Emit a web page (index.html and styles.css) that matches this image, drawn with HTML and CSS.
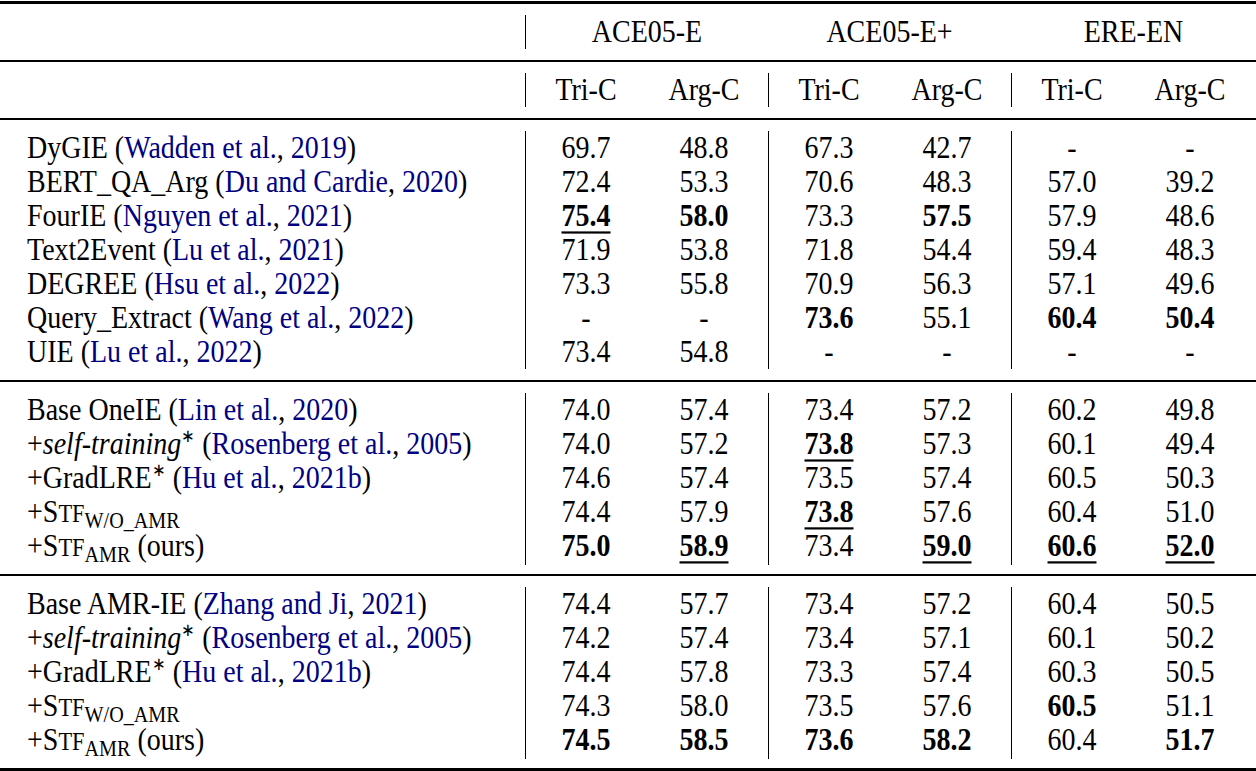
FILE: index.html
```html
<!DOCTYPE html>
<html>
<head>
<meta charset="utf-8">
<link rel="stylesheet" href="styles.css">
</head>
<body>
<div class="table">
  <div class="rule heavy"></div>
  <div class="block">
    <div class="row">
      <div class="name"></div>
      <div class="group head bar"><span class="t">ACE05-E</span></div>
      <div class="group head"><span class="t">ACE05-E+</span></div>
      <div class="group head"><span class="t">ERE-EN</span></div>
    </div>
  </div>
  <div class="rule"></div>
  <div class="block">
    <div class="row">
      <div class="name"></div>
      <div class="group bar"><span class="c">Tri-C</span><span class="c">Arg-C</span></div>
      <div class="group bar"><span class="c">Tri-C</span><span class="c">Arg-C</span></div>
      <div class="group bar"><span class="c">Tri-C</span><span class="c">Arg-C</span></div>
    </div>
  </div>
  <div class="rule"></div>
  <div class="block">
    <div class="row">
      <div class="name">DyGIE (<span class="cite">Wadden et al.</span>, <span class="cite">2019</span>)</div>
      <div class="group bar"><span class="c">69.7</span><span class="c">48.8</span></div>
      <div class="group bar"><span class="c">67.3</span><span class="c">42.7</span></div>
      <div class="group bar"><span class="c">-</span><span class="c">-</span></div>
    </div>
    <div class="row">
      <div class="name">BERT_QA_Arg (<span class="cite">Du and Cardie</span>, <span class="cite">2020</span>)</div>
      <div class="group bar"><span class="c">72.4</span><span class="c">53.3</span></div>
      <div class="group bar"><span class="c">70.6</span><span class="c">48.3</span></div>
      <div class="group bar"><span class="c">57.0</span><span class="c">39.2</span></div>
    </div>
    <div class="row">
      <div class="name">FourIE (<span class="cite">Nguyen et al.</span>, <span class="cite">2021</span>)</div>
      <div class="group bar"><span class="c"><b class="u">75.4</b></span><span class="c"><b>58.0</b></span></div>
      <div class="group bar"><span class="c">73.3</span><span class="c"><b>57.5</b></span></div>
      <div class="group bar"><span class="c">57.9</span><span class="c">48.6</span></div>
    </div>
    <div class="row">
      <div class="name">Text2Event (<span class="cite">Lu et al.</span>, <span class="cite">2021</span>)</div>
      <div class="group bar"><span class="c">71.9</span><span class="c">53.8</span></div>
      <div class="group bar"><span class="c">71.8</span><span class="c">54.4</span></div>
      <div class="group bar"><span class="c">59.4</span><span class="c">48.3</span></div>
    </div>
    <div class="row">
      <div class="name">DEGREE (<span class="cite">Hsu et al.</span>, <span class="cite">2022</span>)</div>
      <div class="group bar"><span class="c">73.3</span><span class="c">55.8</span></div>
      <div class="group bar"><span class="c">70.9</span><span class="c">56.3</span></div>
      <div class="group bar"><span class="c">57.1</span><span class="c">49.6</span></div>
    </div>
    <div class="row">
      <div class="name">Query_Extract (<span class="cite">Wang et al.</span>, <span class="cite">2022</span>)</div>
      <div class="group bar"><span class="c">-</span><span class="c">-</span></div>
      <div class="group bar"><span class="c"><b>73.6</b></span><span class="c">55.1</span></div>
      <div class="group bar"><span class="c"><b>60.4</b></span><span class="c"><b>50.4</b></span></div>
    </div>
    <div class="row">
      <div class="name">UIE (<span class="cite">Lu et al.</span>, <span class="cite">2022</span>)</div>
      <div class="group bar"><span class="c">73.4</span><span class="c">54.8</span></div>
      <div class="group bar"><span class="c">-</span><span class="c">-</span></div>
      <div class="group bar"><span class="c">-</span><span class="c">-</span></div>
    </div>
  </div>
  <div class="rule"></div>
  <div class="block">
    <div class="row">
      <div class="name">Base OneIE (<span class="cite">Lin et al.</span>, <span class="cite">2020</span>)</div>
      <div class="group bar"><span class="c">74.0</span><span class="c">57.4</span></div>
      <div class="group bar"><span class="c">73.4</span><span class="c">57.2</span></div>
      <div class="group bar"><span class="c">60.2</span><span class="c">49.8</span></div>
    </div>
    <div class="row">
      <div class="name">+<i>self-training</i><sup>∗</sup> (<span class="cite">Rosenberg et al.</span>, <span class="cite">2005</span>)</div>
      <div class="group bar"><span class="c">74.0</span><span class="c">57.2</span></div>
      <div class="group bar"><span class="c"><b class="u">73.8</b></span><span class="c">57.3</span></div>
      <div class="group bar"><span class="c">60.1</span><span class="c">49.4</span></div>
    </div>
    <div class="row">
      <div class="name">+GradLRE<sup>∗</sup> (<span class="cite">Hu et al.</span>, <span class="cite">2021b</span>)</div>
      <div class="group bar"><span class="c">74.6</span><span class="c">57.4</span></div>
      <div class="group bar"><span class="c">73.5</span><span class="c">57.4</span></div>
      <div class="group bar"><span class="c">60.5</span><span class="c">50.3</span></div>
    </div>
    <div class="row">
      <div class="name">+S<span class="sc">TF</span><span class="sub">W/O_AMR</span></div>
      <div class="group bar"><span class="c">74.4</span><span class="c">57.9</span></div>
      <div class="group bar"><span class="c"><b class="u">73.8</b></span><span class="c">57.6</span></div>
      <div class="group bar"><span class="c">60.4</span><span class="c">51.0</span></div>
    </div>
    <div class="row">
      <div class="name">+S<span class="sc">TF</span><span class="sub">AMR</span> (ours)</div>
      <div class="group bar"><span class="c"><b>75.0</b></span><span class="c"><b class="u">58.9</b></span></div>
      <div class="group bar"><span class="c">73.4</span><span class="c"><b class="u">59.0</b></span></div>
      <div class="group bar"><span class="c"><b class="u">60.6</b></span><span class="c"><b class="u">52.0</b></span></div>
    </div>
  </div>
  <div class="rule"></div>
  <div class="block">
    <div class="row">
      <div class="name">Base AMR-IE (<span class="cite">Zhang and Ji</span>, <span class="cite">2021</span>)</div>
      <div class="group bar"><span class="c">74.4</span><span class="c">57.7</span></div>
      <div class="group bar"><span class="c">73.4</span><span class="c">57.2</span></div>
      <div class="group bar"><span class="c">60.4</span><span class="c">50.5</span></div>
    </div>
    <div class="row">
      <div class="name">+<i>self-training</i><sup>∗</sup> (<span class="cite">Rosenberg et al.</span>, <span class="cite">2005</span>)</div>
      <div class="group bar"><span class="c">74.2</span><span class="c">57.4</span></div>
      <div class="group bar"><span class="c">73.4</span><span class="c">57.1</span></div>
      <div class="group bar"><span class="c">60.1</span><span class="c">50.2</span></div>
    </div>
    <div class="row">
      <div class="name">+GradLRE<sup>∗</sup> (<span class="cite">Hu et al.</span>, <span class="cite">2021b</span>)</div>
      <div class="group bar"><span class="c">74.4</span><span class="c">57.8</span></div>
      <div class="group bar"><span class="c">73.3</span><span class="c">57.4</span></div>
      <div class="group bar"><span class="c">60.3</span><span class="c">50.5</span></div>
    </div>
    <div class="row">
      <div class="name">+S<span class="sc">TF</span><span class="sub">W/O_AMR</span></div>
      <div class="group bar"><span class="c">74.3</span><span class="c">58.0</span></div>
      <div class="group bar"><span class="c">73.5</span><span class="c">57.6</span></div>
      <div class="group bar"><span class="c"><b>60.5</b></span><span class="c">51.1</span></div>
    </div>
    <div class="row">
      <div class="name">+S<span class="sc">TF</span><span class="sub">AMR</span> (ours)</div>
      <div class="group bar"><span class="c"><b>74.5</b></span><span class="c"><b>58.5</b></span></div>
      <div class="group bar"><span class="c"><b>73.6</b></span><span class="c"><b>58.2</b></span></div>
      <div class="group bar"><span class="c">60.4</span><span class="c"><b>51.7</b></span></div>
    </div>
  </div>
  <div class="rule heavy"></div>
</div>
</body>
</html>
```

FILE: styles.css
```css
html, body {
  margin: 0;
  padding: 0;
  background: #ffffff;
  overflow: hidden;
}

body {
  font-family: "Liberation Serif", "Times New Roman", serif;
  font-size: 28px;
  color: #000000;
}

.table {
  width: 1256px;
  padding-top: 1px;
}

.rule {
  height: 2px;
  background: #000000;
}

.rule.heavy {
  height: 3px;
}

.block {
  padding: 11px 0;
}

.row {
  display: grid;
  grid-template-columns: 525px 243px 243px 245px;
  height: 34px;
  line-height: 34px;
  white-space: nowrap;
}

.name {
  padding-left: 27px;
  transform: scaleY(1.1);
}

.group {
  display: grid;
  grid-template-columns: 120px 116px;
}

.group.head {
  display: block;
  text-align: center;
}

.t {
  display: inline-block;
  transform: scaleY(1.1);
}

.bar {
  border-left: 1.5px solid #000000;
}

.c {
  text-align: center;
  transform: scaleY(1.1);
}

.cite {
  color: #000080;
}

b {
  font-weight: bold;
}

.u {
  text-decoration: underline;
  text-decoration-thickness: 1.5px;
  text-underline-offset: 5px;
}

sup {
  font-size: 0.6em;
  line-height: 0;
  vertical-align: 0.65em;
}

.sc {
  font-size: 0.8em;
}

.sub {
  font-size: 0.72em;
  line-height: 0;
  vertical-align: -0.3em;
}
```
